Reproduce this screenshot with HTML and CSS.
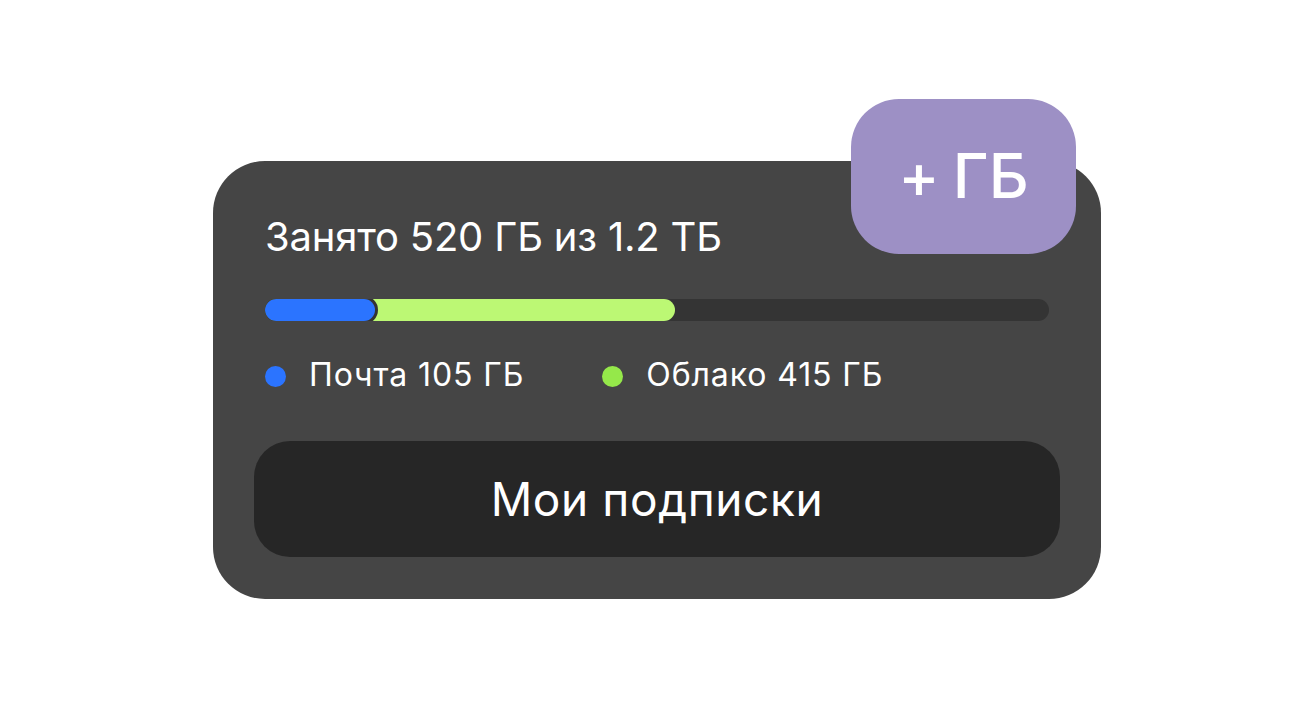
FILE: index.html
```html
<!DOCTYPE html>
<html lang="ru">
<head>
<meta charset="utf-8">
<link rel="stylesheet" href="styles.css">
</head>
<body>
<div class="card">
  <div class="badge"><span class="plus">+</span>ГБ</div>
  <div class="title">Занято 520 ГБ из 1.2 ТБ</div>
  <div class="track">
    <div class="seg seg-cloud" style="width: 410px"></div>
    <div class="seg seg-mail" style="width: 110px"></div>
  </div>
  <div class="legend">
    <div class="legend-item"><span class="dot dot-mail"></span><span class="legend-text">Почта 105 ГБ</span></div>
    <div class="legend-item"><span class="dot dot-cloud"></span><span class="legend-text">Облако 415 ГБ</span></div>
  </div>
  <div class="button">Мои подписки</div>
</div>
</body>
</html>
```
FILE: styles.css
```css
html, body {
  margin: 0;
  padding: 0;
  background: #ffffff;
}
body {
  width: 1314px;
  height: 705px;
  display: flex;
  justify-content: center;
  align-items: flex-start;
  padding-top: 161px;
  box-sizing: border-box;
  font-family: "Inter", "Noto Sans", sans-serif;
  color: #ffffff;
}
.card {
  position: relative;
  width: 888px;
  height: 438px;
  box-sizing: border-box;
  background: #454545;
  border-radius: 52px;
  padding: 52px 41px 0 41px;
  display: flex;
  flex-direction: column;
}
.badge {
  position: absolute;
  left: 638px;
  top: -62px;
  width: 225px;
  height: 155px;
  border-radius: 48px;
  background: #9d90c5;
  display: flex;
  align-items: center;
  justify-content: center;
  font-size: 62px;
  font-weight: 500;
  line-height: 1;
  padding-bottom: 2px;
  box-sizing: border-box;
}
.plus {
  margin-right: 13px;
}
.title {
  padding: 0 11px;
  font-size: 40px;
  line-height: 48px;
  letter-spacing: -0.2px;
}
.track {
  position: relative;
  margin: 38px 11px 0 11px;
  height: 22px;
  border-radius: 11px;
  background: #343434;
  overflow: hidden;
}
.seg {
  position: absolute;
  left: 0;
  top: 0;
  height: 22px;
  border-radius: 11px;
}
.seg-cloud {
  background: #bcf874;
}
.seg-mail {
  background: #2b74ff;
  box-shadow: 0 0 0 3px #333333;
}
.legend {
  display: flex;
  gap: 78px;
  margin: 37px 11px 0 11px;
}
.legend-item {
  display: flex;
  align-items: center;
  gap: 23px;
}
.dot {
  width: 21px;
  height: 21px;
  border-radius: 50%;
  margin-top: 3px;
}
.dot-mail { background: #2b74ff; }
.dot-cloud { background: #95e84a; }
.legend-text {
  font-size: 32px;
  line-height: 34px;
  letter-spacing: 0.9px;
}
.button {
  margin-top: 49px;
  height: 116px;
  border-radius: 36px;
  background: #262626;
  display: flex;
  align-items: center;
  justify-content: center;
  font-size: 46px;
  letter-spacing: 0.6px;
}
```
